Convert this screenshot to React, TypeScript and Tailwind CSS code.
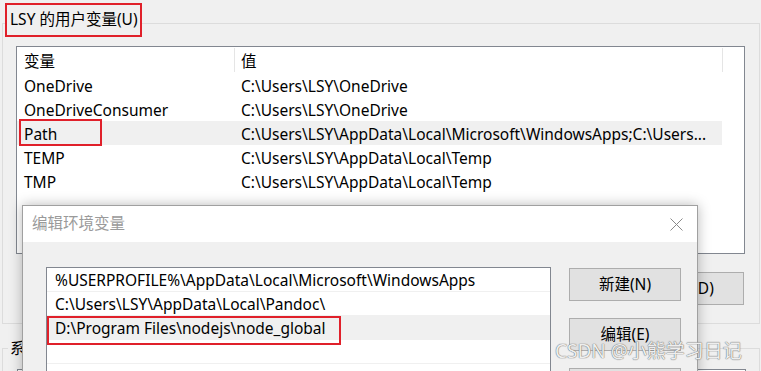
import React from "react";

const userVars: [string, string][] = [
  ["OneDrive", "C:\\Users\\LSY\\OneDrive"],
  ["OneDriveConsumer", "C:\\Users\\LSY\\OneDrive"],
  ["Path", "C:\\Users\\LSY\\AppData\\Local\\Microsoft\\WindowsApps;C:\\Users..."],
  ["TEMP", "C:\\Users\\LSY\\AppData\\Local\\Temp"],
  ["TMP", "C:\\Users\\LSY\\AppData\\Local\\Temp"],
];

const pathEntries = [
  "%USERPROFILE%\\AppData\\Local\\Microsoft\\WindowsApps",
  "C:\\Users\\LSY\\AppData\\Local\\Pandoc\\",
  "D:\\Program Files\\nodejs\\node_global",
  "",
];

function WinButton({ label, className = "" }: { label: string; className?: string }) {
  return (
    <div
      className={`flex h-[33px] w-[112px] items-center justify-center border border-[#adadad] bg-[#e1e1e1] ${className}`}
    >
      {label}
    </div>
  );
}

function EditDialog() {
  return (
    <div className="absolute left-[22px] top-[205px] z-20 h-[200px] w-[676px] border border-[#a0a0a0] bg-[#f0f0f0] shadow-[0_0_12px_rgba(0,0,0,0.28)]">
      <div className="flex h-[36px] items-center justify-between bg-white pl-[9px] pr-[14px]">
        <span className="text-[#9a9a9a]">编辑环境变量</span>
        <svg width="13" height="13" viewBox="0 0 13 13" className="text-[#8a8a8a]">
          <path d="M0.5 0.5 L12.5 12.5 M12.5 0.5 L0.5 12.5" stroke="currentColor" strokeWidth="1" fill="none" />
        </svg>
      </div>
      <div className="flex items-start pl-[23px] pt-[25px]">
        <div className="h-[200px] w-[505px] border border-[#828790] bg-white">
          {pathEntries.map((p, i) => (
            <div
              key={i}
              className={`relative flex h-[24px] items-center whitespace-nowrap border-b border-[#f0f0f0] pl-[8px] pt-[3px] ${
                i === 2 ? "bg-[#f0f0f0]" : ""
              }`}
            >
              {p}
              {i === 2 && (
                <div className="absolute left-0 top-0 h-[29px] w-[294px] border-2 border-[#e0202a]" />
              )}
            </div>
          ))}
        </div>
        <div className="ml-[18px] mt-[1px] flex flex-col gap-[17px]">
          <WinButton label="新建(N)" className="w-[111px]" />
          <WinButton label="编辑(E)" className="w-[111px]" />
          <WinButton label="浏览(B)..." className="w-[111px]" />
        </div>
      </div>
    </div>
  );
}

export default function App() {
  return (
    <div className="relative h-[371px] w-[761px] overflow-hidden bg-[#f0f0f0] font-['Noto_Sans','Noto_Sans_CJK_SC',sans-serif] text-[15.5px] leading-none text-black">
      {/* user variables group */}
      <div className="px-[2px] pt-[3px]">
        <div className="relative z-10 ml-[3px] flex">
          <span className="flex h-[34px] items-center border-2 border-[#e0202a] bg-[#f0f0f0] pl-[3px] pr-[2px]">
            LSY 的用户变量(U)
          </span>
        </div>
        <div className="-mt-[14px] h-[301px] w-[758px] border border-[#dcdcdc]">
          <div className="ml-[13px] mt-[22px] h-[208px] w-[729px] border border-[#828790] bg-white">
            <div className="flex h-[26px] items-center">
              <div className="w-[217px] pl-[7px] pt-[3px]">变量</div>
              <div className="h-[24px] w-px bg-[#e5e5e5]" />
              <div className="w-[487px] pl-[6px] pt-[3px]">值</div>
              <div className="h-[24px] w-px bg-[#e5e5e5]" />
            </div>
            {userVars.map(([name, value]) => (
              <div
                key={name}
                className={`flex h-[24px] w-[705px] whitespace-nowrap ${
                  name === "Path" ? "bg-[#f0f0f0]" : ""
                }`}
              >
                <div className="relative flex w-[218px] items-center pl-[7px] pt-[3px]">
                  {name}
                  {name === "Path" && (
                    <div className="absolute left-[2px] top-[-2px] h-[27px] w-[83px] border-2 border-[#e0202a]" />
                  )}
                </div>
                <div className="flex items-center overflow-hidden pl-[6px] pt-[3px]">{value}</div>
              </div>
            ))}
          </div>
          <div className="mr-[15px] mt-[18px] flex justify-end gap-[10px]">
            <WinButton label="新建(N)..." className="h-[32px]" />
            <WinButton label="编辑(E)..." className="h-[32px]" />
            <WinButton label="删除(D)" className="h-[32px]" />
          </div>
        </div>
      </div>

      {/* system variables group */}
      <div className="px-[2px] pt-[13px]">
        <div className="relative z-10 ml-[6px] flex">
          <span className="bg-[#f0f0f0] px-[2px] leading-[22px]">系统变量(S)</span>
        </div>
        <div className="-mt-[11px] h-[60px] w-[758px] border border-[#dcdcdc]">
          <div className="ml-[14px] mt-[20px] h-[40px] w-[729px] border border-[#828790] bg-white" />
        </div>
      </div>

      <EditDialog />

      <div className="absolute left-[555px] top-[339px] z-30 whitespace-nowrap text-[19px] leading-[24px] text-[#eeeeee] [text-shadow:0_0_1px_#6b6b6b,0_0_1px_#6b6b6b]">
        CSDN @小熊学习日记
      </div>
    </div>
  );
}
